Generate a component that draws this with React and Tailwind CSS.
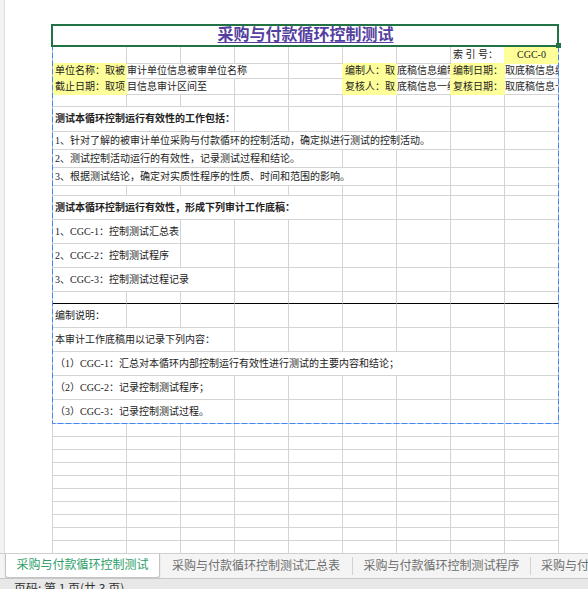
import clsx from 'clsx'

const SPAN = {
  1: 'col-span-1',
  2: 'col-span-2',
  3: 'col-span-3',
  5: 'col-span-5',
  6: 'col-span-6',
  7: 'col-span-7',
}

const empty = n => Array.from({ length: n }, () => ({}))

// Rows of the sheet, top to bottom (heights read off the screenshot)
const rows = [
  {
    h: 'h-[18px]',
    cells: [
      { by: true }, {}, {}, {}, {}, { by: true }, {},
      { t: '索 引 号：', ry: true, by: true },
      { t: 'CGC-0', y: true, c: true },
    ],
  },
  {
    h: 'h-[15px]',
    cells: [
      { t: '单位名称：取被', y: true },
      { t: '审计单位信息被审单位名称', s: 3, p0: true },
      { ry: true },
      { t: '编制人：取', y: true },
      { t: '底稿信息编制人', p0: true, ry: true },
      { t: '编制日期：', y: true },
      { t: '取底稿信息编制日期', p0: true },
    ],
  },
  {
    h: 'h-[16px]',
    cells: [
      { t: '截止日期：取项', y: true },
      { t: '目信息审计区间至', s: 2, p0: true },
      {},
      { ry: true },
      { t: '复核人：取', y: true },
      { t: '底稿信息一级复核人', p0: true, ry: true },
      { t: '复核日期：', y: true },
      { t: '取底稿信息一级复核日期', p0: true },
    ],
  },
  { h: 'h-[12px]', cells: empty(9) },
  { h: 'h-[25px]', cells: [{ t: '测试本循环控制运行有效性的工作包括：', s: 3, b: true }, ...empty(6)] },
  { h: 'h-[18px]', cells: [{ t: '1、针对了解的被审计单位采购与付款循环的控制活动，确定拟进行测试的控制活动。', s: 7 }, ...empty(2)] },
  { h: 'h-[18px]', cells: [{ t: '2、测试控制活动运行的有效性，记录测试过程和结论。', s: 5 }, ...empty(4)] },
  { h: 'h-[18px]', cells: [{ t: '3、根据测试结论，确定对实质性程序的性质、时间和范围的影响。', s: 6 }, ...empty(3)] },
  { h: 'h-[10px]', cells: empty(9) },
  { h: 'h-[24px]', cells: [{ t: '测试本循环控制运行有效性，形成下列审计工作底稿：', s: 5, b: true }, ...empty(4)] },
  { h: 'h-[24px]', cells: [{ t: '1、CGC-1：控制测试汇总表', s: 2 }, ...empty(7)] },
  { h: 'h-[24px]', cells: [{ t: '2、CGC-2：控制测试程序', s: 2 }, ...empty(7)] },
  { h: 'h-[24px]', cells: [{ t: '3、CGC-3：控制测试过程记录', s: 3 }, ...empty(6)] },
  { h: 'h-[12px]', black: true, cells: empty(9) },
  { h: 'h-[24px]', cells: [{ t: '编制说明：' }, ...empty(8)] },
  { h: 'h-[24px]', cells: [{ t: '本审计工作底稿用以记录下列内容：', s: 3 }, ...empty(6)] },
  { h: 'h-[24px]', cells: [{ t: '（1）CGC-1：汇总对本循环内部控制运行有效性进行测试的主要内容和结论；', s: 7 }, ...empty(2)] },
  { h: 'h-[24px]', cells: [{ t: '（2）CGC-2：记录控制测试程序；', s: 3 }, ...empty(6)] },
  { h: 'h-[24px]', cells: [{ t: '（3）CGC-3：记录控制测试过程。', s: 3 }, ...empty(6)] },
]

const tail = Array.from({ length: 10 }, () => ({ h: 'h-[13px]', cells: empty(9) }))

function Row({ row }) {
  return (
    <div className={clsx('grid w-[507px] grid-cols-[74px_repeat(8,54px)] border-l border-l-[#d4d4d4]', row.h)}>
      {row.cells.map((c, i) => (
        <div
          key={i}
          className={clsx(
            'flex items-center overflow-hidden whitespace-nowrap border-r border-b text-[10px] leading-none text-[#222]',
            SPAN[c.s || 1],
            c.y && 'bg-[#ffff99]',
            c.y || c.ry ? 'border-r-[#ffff99]' : 'border-r-[#d4d4d4]',
            row.black ? 'border-b-black' : c.y || c.by ? 'border-b-[#ffff99]' : 'border-b-[#d4d4d4]',
            c.c ? 'justify-center' : c.p0 ? 'pl-0' : 'pl-[2px]',
            c.b && 'font-bold'
          )}
        >
          {c.t}
        </div>
      ))}
    </div>
  )
}

function Sheet() {
  return (
    <div className="flex-1 overflow-hidden pl-[47px] pt-[24px]">
      <div className="relative w-[507px]">
        <div className="relative z-10 flex h-[22px] w-[507px] items-center justify-center">
          <span className="text-[16px] font-bold leading-none text-[#553fa0] underline underline-offset-2">
            采购与付款循环控制测试
          </span>
          <div className="pointer-events-none absolute -bottom-px -left-px right-0 top-0 border-2 border-[#217346]" />
          <div className="absolute -bottom-[2px] -right-[2px] h-[5px] w-[5px] bg-[#217346]" />
        </div>
        {rows.map((r, i) => (
          <Row key={i} row={r} />
        ))}
        {/* print area */}
        <svg className="pointer-events-none absolute left-0 top-0 overflow-visible" width="507" height="400">
          <rect x="0.5" y="0.5" width="506" height="399" fill="none" stroke="#4285f4" strokeWidth="1" strokeDasharray="6 2" />
        </svg>
      </div>
      {tail.map((r, i) => (
        <Row key={i} row={r} />
      ))}
    </div>
  )
}

function Tabs() {
  return (
    <div className="flex h-[25px] shrink-0 overflow-hidden border-t border-[#cfcfcf] bg-[#f4f4f4] font-['Noto_Sans_CJK_SC',sans-serif] text-[12px]">
      <div className="w-[5px] shrink-0" />
      <div className="-mt-px flex h-[25px] w-[155px] shrink-0 items-center justify-center rounded-b-[3px] border border-t-0 border-[#c4c4c4] bg-white pb-[2px] text-[#2e9d69] shadow-[0_1px_2px_rgba(0,0,0,0.12)]">
        采购与付款循环控制测试
      </div>
      <div className="flex w-[192px] shrink-0 items-center justify-center pb-[2px] text-[#6e6e6e]">
        采购与付款循环控制测试汇总表
      </div>
      <div className="my-[3px] w-px shrink-0 bg-[#d2d2d2]" />
      <div className="flex w-[177px] shrink-0 items-center justify-center pb-[2px] text-[#6e6e6e]">
        采购与付款循环控制测试程序
      </div>
      <div className="my-[3px] w-px shrink-0 bg-[#d2d2d2]" />
      <div className="flex shrink-0 items-center pb-[2px] pl-[10px] text-[#6e6e6e]">
        采购与付款循环控制测试过程记录
      </div>
    </div>
  )
}

export default function App() {
  return (
    <div className="flex h-[589px] w-[588px] flex-col overflow-hidden bg-white font-['Liberation_Serif','Noto_Sans_CJK_SC',serif]">
      <div className="flex min-h-0 flex-1">
        <div className="w-[5px] shrink-0 border-r border-[#dedede] bg-[#f3f3f3]" />
        <Sheet />
      </div>
      <Tabs />
      <div className="h-[11px] shrink-0 overflow-hidden border-t border-[#c8c8c8] bg-[#e8e8e8] pl-[14px] pt-[2px] font-['Noto_Sans_CJK_SC',sans-serif] text-[12px] leading-[14px] text-[#333]">
        页码: 第 1 页(共 3 页)
      </div>
    </div>
  )
}
